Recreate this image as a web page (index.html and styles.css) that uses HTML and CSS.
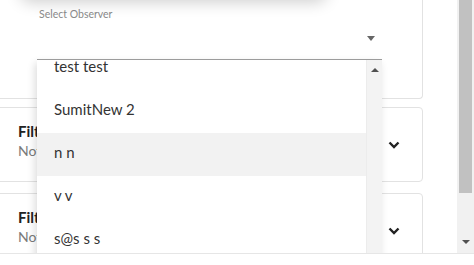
FILE: index.html
```html
<!DOCTYPE html>
<html lang="en">
<head>
    <meta charset="UTF-8" />
    <meta name="viewport" content="width=device-width, initial-scale=1.0"/>
    <title>Select Observer</title>
    <link rel="stylesheet" href="styles.css">
</head>
<body>
    <div class="modal-body">
        <div class="content">
            <div class="header-shadow"></div>
            <div class="cards">
                <div class="card observer-card">
                    <label class="field-label">Select Observer</label>
                    <div class="select-field">
                        <span class="select-arrow"></span>
                    </div>
                </div>

                <div class="card filter-card first">
                    <div class="filter-text">
                        <div class="filter-title">Filter by Observer</div>
                        <div class="filter-sub">Not selected</div>
                    </div>
                    <svg class="chevron" width="12" height="8" viewBox="0 0 12 8">
                        <path d="M1.5 1.5 L6 6 L10.5 1.5" fill="none" stroke="#222" stroke-width="2.4"/>
                    </svg>
                </div>

                <div class="card filter-card second">
                    <div class="filter-text">
                        <div class="filter-title">Filter by Status</div>
                        <div class="filter-sub">Not selected</div>
                    </div>
                    <svg class="chevron" width="12" height="8" viewBox="0 0 12 8">
                        <path d="M1.5 1.5 L6 6 L10.5 1.5" fill="none" stroke="#222" stroke-width="2.4"/>
                    </svg>
                </div>
            </div>

            <!-- open dropdown of the observer select -->
            <div class="dropdown">
                <ul class="options">
                    <li>test test</li>
                    <li>SumitNew 2</li>
                    <li class="hover">n n</li>
                    <li>v v</li>
                    <li>s@s s s</li>
                </ul>
                <div class="list-scroll">
                    <span class="arrow-up"></span>
                </div>
            </div>
        </div>

        <div class="page-scroll">
            <div class="thumb"></div>
            <span class="arrow-down"></span>
        </div>
    </div>
    <div class="modal-footer"></div>
</body>
</html>
```

FILE: styles.css
```css
body {
    margin: 0;
    background-color: #fff;
    font-family: Lato, "Open Sans", Arial, sans-serif;
    color: #333;
    overflow: hidden;
}

.modal-body {
    display: flex;
    height: 253px;
    border-bottom: 1px solid #e6e6e6;
    overflow: hidden;
}

.content {
    flex: 1;
    position: relative;
    overflow: hidden;
}

/* shadow of the sticky header scrolled just above the view */
.header-shadow {
    position: relative;
    z-index: 2;
    height: 20px;
    margin: -20px 130px 0 20px;
    box-shadow: 0 2px 16px rgba(0, 0, 0, .2);
    border-radius: 60px;
}

.cards {
    margin-left: -20px;
    width: 443px;
    display: flex;
    flex-direction: column;
}

.card {
    background-color: #fff;
    border: 1px solid #e2e2e2;
    border-radius: 4px;
    box-sizing: border-box;
}

.observer-card {
    height: 99px;
    border-top: none;
    border-radius: 0 0 4px 4px;
    padding: 8px 0 0 58px;
}

.field-label {
    display: block;
    font-size: 10.5px;
    color: #8a8a8a;
    line-height: 12px;
}

.select-field {
    display: flex;
    justify-content: flex-end;
    padding: 16px 47px 0 0;
}

.select-arrow {
    width: 0;
    height: 0;
    border-left: 4.5px solid transparent;
    border-right: 4.5px solid transparent;
    border-top: 5px solid #666;
}

.filter-card {
    height: 75px;
    display: flex;
    align-items: center;
    padding: 0 22px 0 37px;
}

.filter-card.first {
    margin-top: 8px;
}

.filter-card.second {
    margin-top: 11px;
}

.filter-text {
    flex: 1;
    padding-bottom: 8px;
}

.filter-title {
    font-size: 15px;
    font-weight: 700;
    color: #222;
    line-height: 20px;
}

.filter-sub {
    font-size: 14px;
    color: #7a7a7a;
    line-height: 20px;
}

.chevron {
    margin-top: 1px;
}

.dropdown {
    position: absolute;
    z-index: 3;
    left: 37px;
    top: 59px;
    width: 345px;
    height: 200px;
    display: flex;
    background-color: #fff;
    border-top: 1px solid #9c9c9c;
    box-shadow: -2px 4px 8px rgba(0, 0, 0, .14);
    overflow: hidden;
}

.options {
    flex: 1;
    list-style: none;
    margin: -13px 0 0 0;
    padding: 0;
}

.options li {
    height: 43px;
    box-sizing: border-box;
    display: flex;
    align-items: center;
    padding: 0 0 5px 17px;
    font-size: 15px;
    color: #333;
}

.options li.hover {
    background-color: #f2f2f2;
}

.list-scroll {
    width: 16px;
    background-color: #f3f3f3;
    border-left: 1px solid #ececec;
    display: flex;
    justify-content: center;
    padding-top: 8px;
    box-sizing: border-box;
}

.arrow-up {
    width: 0;
    height: 0;
    border-left: 4px solid transparent;
    border-right: 4px solid transparent;
    border-bottom: 4px solid #505050;
}

.page-scroll {
    width: 17px;
    background-color: #f1f1f1;
    display: flex;
    flex-direction: column;
    align-items: center;
    justify-content: space-between;
    padding-bottom: 9px;
    box-sizing: border-box;
}

.thumb {
    width: 13px;
    height: 193px;
    background-color: #c1c1c1;
}

.arrow-down {
    width: 0;
    height: 0;
    border-left: 4px solid transparent;
    border-right: 4px solid transparent;
    border-top: 4px solid #505050;
}

.modal-footer {
    height: 11px;
}
```
